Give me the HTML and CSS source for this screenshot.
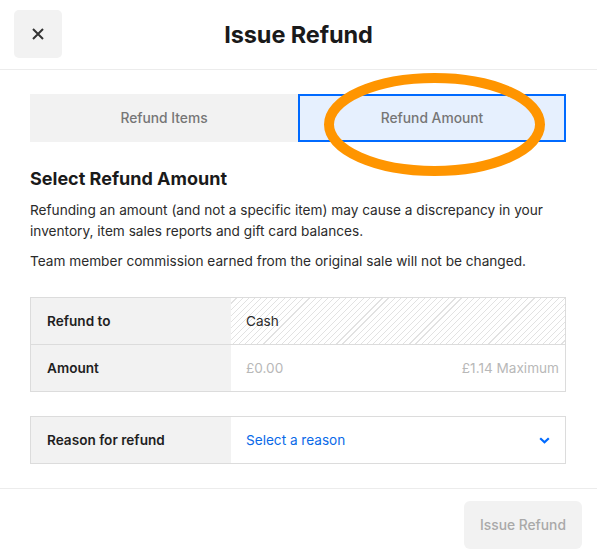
FILE: index.html
```html
<!DOCTYPE html>
<html>
<head>
<meta charset="utf-8">
<link rel="stylesheet" href="styles.css">
</head>
<body>
<div class="modal">
  <header class="header">
    <button class="close" aria-label="Close">
      <svg width="12" height="12" viewBox="0 0 12 12"><path d="M1 1L11 11M11 1L1 11" stroke="#333" stroke-width="2" fill="none"/></svg>
    </button>
    <h1 class="title">Issue Refund</h1>
    <span class="spacer"></span>
  </header>
  <main class="content">
    <div class="tabs">
      <div class="tab">Refund Items</div>
      <div class="tab active">Refund Amount</div>
    </div>
    <h2 class="heading">Select Refund Amount</h2>
    <p class="text">Refunding an amount (and not a specific item) may cause a discrepancy in your inventory, item sales reports and gift card balances.</p>
    <p class="text second">Team member commission earned from the original sale will not be changed.</p>
    <div class="table">
      <div class="label">Refund to</div>
      <div class="value hatched">Cash</div>
      <div class="label bordered">Amount</div>
      <div class="value bordered split"><span class="placeholder">£0.00</span><span class="placeholder">£1.14 Maximum</span></div>
    </div>
    <div class="table reason">
      <div class="label">Reason for refund</div>
      <div class="value split select"><span>Select a reason</span>
        <svg width="11" height="7" viewBox="0 0 11 7"><path d="M1.2 1.2L5.5 5.3L9.8 1.2" stroke="#006aff" stroke-width="2.2" fill="none"/></svg>
      </div>
    </div>
  </main>
  <footer class="footer">
    <button class="submit">Issue Refund</button>
  </footer>
  <svg class="annotation" width="231" height="111" viewBox="0 0 231 111"><ellipse cx="115.5" cy="55.5" rx="105.5" ry="46.5" fill="none" stroke="#ff9500" stroke-width="10"/></svg>
</div>
</body>
</html>
```
FILE: styles.css
```css
* { box-sizing: border-box; }
html, body { margin: 0; padding: 0; background: #fff; }
body {
  font-family: Inter, "Noto Sans", sans-serif;
  color: #1f1f1f;
  width: 597px;
  height: 557px;
  overflow: hidden;
}
.modal { position: relative; width: 597px; height: 557px; }
.header {
  height: 70px;
  border-bottom: 1px solid #ececec;
  display: grid;
  grid-template-columns: 48px 1fr 48px;
  align-items: center;
  padding: 0 14px;
}
.close {
  width: 48px; height: 48px;
  border: none; border-radius: 5px;
  background: #f2f2f2;
  display: flex; align-items: center; justify-content: center;
  padding: 0; margin-top: -1px;
}
.title {
  margin: 0;
  text-align: center;
  font-size: 23.5px;
  line-height: 30px;
  font-weight: 700;
  color: #1a1a1a;
  letter-spacing: -0.1px;
  padding-top: 1px;
}
.content { padding: 24px 31px 24px 30px; }
.tabs {
  display: grid;
  grid-template-columns: 268px 268px;
  height: 48px;
}
.tab {
  display: flex; align-items: center; justify-content: center;
  background: #f2f2f2;
  color: #767676;
  font-size: 13.8px;
  font-weight: 500;
}
.tab.active {
  background: #e6f0fe;
  border: 2px solid #006aff;
}
.heading {
  margin: 25px 0 0;
  font-size: 18px;
  line-height: 24px;
  font-weight: 700;
  color: #1a1a1a;
}
.text {
  margin: 9px 0 0;
  font-size: 13.65px;
  line-height: 21px;
  color: #2b2b2b;
}
.table {
  margin-top: 25px;
  border: 1px solid #dcdcdc;
  display: grid;
  grid-template-columns: 200px 1fr;
  width: 536px;
}
.label {
  background: #f2f2f2;
  height: 46px;
  display: flex; align-items: center;
  padding-left: 16px;
  font-size: 13.6px;
  font-weight: 600;
  color: #1f1f1f;
}
.value {
  height: 46px;
  display: flex; align-items: center;
  padding-left: 15px;
  padding-right: 6px;
  font-size: 13.6px;
  color: #2b2b2b;
}
.bordered { border-top: 1px solid #dcdcdc; height: 47px; }
.hatched {
  background: repeating-linear-gradient(135deg, #fff 0, #fff 3.5px, #e2e2e2 3.5px, #e2e2e2 4.3px);
}
.split { justify-content: space-between; }
.placeholder { color: #b8b8b8; }
.reason { margin-top: 24px; }
.select { padding-right: 15px; }
.select span { color: #0a6ae8; }
.footer {
  border-top: 1px solid #ececec;
  display: flex;
  justify-content: flex-end;
  padding: 12px 15px 0 0;
}
.submit {
  width: 118px; height: 48px;
  border: none; border-radius: 6px;
  background: #f2f2f2;
  color: #a9a9a9;
  font-family: Inter, "Noto Sans", sans-serif;
  font-size: 13.8px;
  font-weight: 500;
}
.annotation { position: absolute; left: 319px; top: 69px; }
```
